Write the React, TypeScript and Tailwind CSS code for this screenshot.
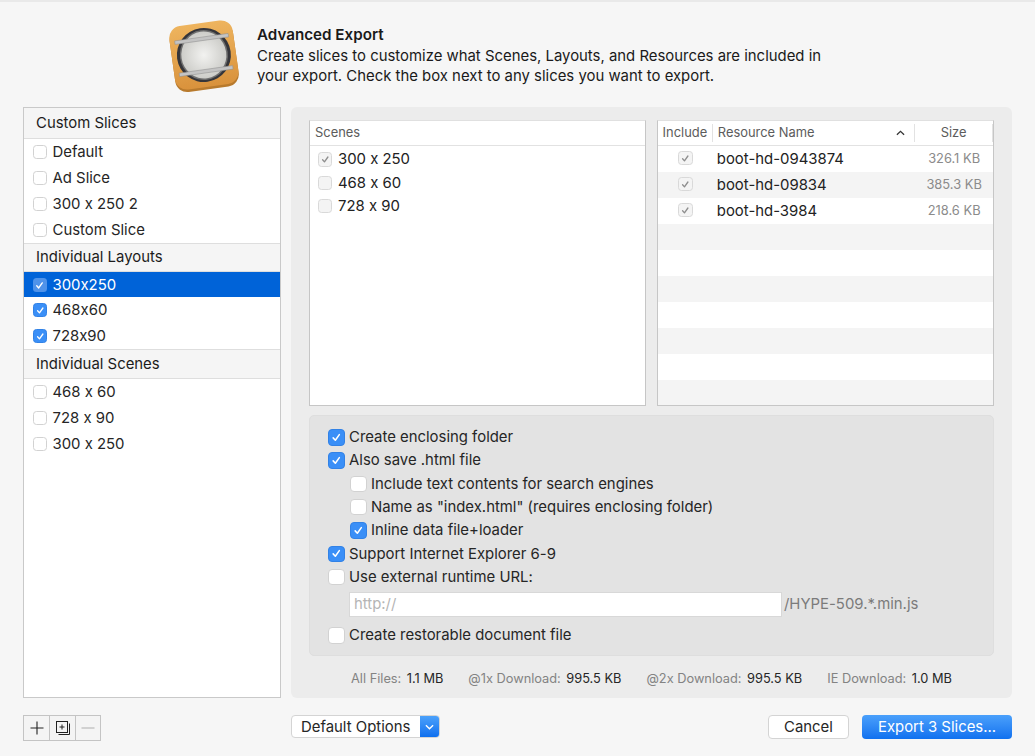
// App.tsx
// Advanced Export sheet

function Check({ className }: { className: string }) {
  return (
    <svg viewBox="0 0 16 16" className={className} fill="none" stroke="currentColor" strokeWidth="1.7" strokeLinecap="round" strokeLinejoin="round">
      <path d="M4.6 8.4 L7 11 L11.4 4.8" />
    </svg>
  )
}

type BoxProps = { checked?: boolean; disabled?: boolean; large?: boolean; onSelected?: boolean }

function Box({ checked, disabled, large, onSelected }: BoxProps) {
  const size = large ? 'w-[16.5px] h-[16.5px] rounded-[4px]' : 'w-[14.5px] h-[14.5px] rounded-[3.5px]'
  if (disabled) {
    return (
      <span className={`${size} shrink-0 flex items-center justify-center bg-[#f4f4f4] border border-[#d9d9d9] text-[#8e8e8e]`}>
        {checked && <Check className="w-[13px] h-[13px]" />}
      </span>
    )
  }
  if (checked) {
    return (
      <span className={`${size} shrink-0 flex items-center justify-center text-white ${onSelected ? 'bg-[#4f93ea]' : 'bg-[#3a8ff7] border border-[#3282e6]'}`}>
        <Check className={large ? 'w-[15px] h-[15px]' : 'w-[13px] h-[13px]'} />
      </span>
    )
  }
  return <span className={`${size} shrink-0 bg-white border border-[#d2d2d2]`} />
}

function SectionHead({ label, className }: { label: string; className: string }) {
  return (
    <div className={`${className} flex items-center pl-[12px] bg-[#f5f5f5] border-b border-[#dedede] text-[14.9px] text-[#1c1c1c]`}>
      {label}
    </div>
  )
}

function SliceRow({ label, checked, selected }: { label: string; checked?: boolean; selected?: boolean }) {
  return (
    <div className={`${selected ? 'h-[25px] pt-[1px] bg-[#0063d8] text-white' : 'h-[26px] text-[#262626]'} flex items-center gap-[5.5px] pl-[8.5px] text-[14.9px]`}>
      <Box checked={checked} onSelected={selected} />
      <span>{label}</span>
    </div>
  )
}

function SlicePanel() {
  return (
    <div className="w-[258px] shrink-0 bg-white border-[1.5px] border-[#c9c9c9]">
      <SectionHead label="Custom Slices" className="h-[31px] pt-[1px]" />
      <SliceRow label="Default" />
      <SliceRow label="Ad Slice" />
      <SliceRow label="300 x 250 2" />
      <SliceRow label="Custom Slice" />
      <SectionHead label="Individual Layouts" className="h-[29px] border-t border-[#dedede]" />
      <SliceRow label="300x250" checked selected />
      <SliceRow label="468x60" checked />
      <SliceRow label="728x90" checked />
      <SectionHead label="Individual Scenes" className="h-[30px] border-t border-[#dedede]" />
      <SliceRow label="468 x 60" />
      <SliceRow label="728 x 90" />
      <SliceRow label="300 x 250" />
    </div>
  )
}

function ScenesTable() {
  const scenes = [
    { name: '300 x 250', checked: true },
    { name: '468 x 60', checked: false },
    { name: '728 x 90', checked: false },
  ]
  return (
    <div className="w-[337px] bg-white border border-[#c6c6c6] border-t-[#e0e0e0]">
      <div className="h-[25px] flex items-center pl-[5px] border-b border-[#e2e2e2] text-[12.9px] text-[#5c5c5c]">Scenes</div>
      <div className="pt-[2px]">
        {scenes.map(s => (
          <div key={s.name} className="h-[23.3px] flex items-center gap-[6px] pl-[7.5px] text-[14.9px] text-[#222222]">
            <Box disabled checked={s.checked} />
            <span>{s.name}</span>
          </div>
        ))}
      </div>
    </div>
  )
}

function ResourceTable() {
  const rows = [
    { name: 'boot-hd-0943874', size: '326.1 KB' },
    { name: 'boot-hd-09834', size: '385.3 KB' },
    { name: 'boot-hd-3984', size: '218.6 KB' },
    null, null, null, null, null, null, null,
  ]
  return (
    <div className="w-[337px] bg-white border border-[#c6c6c6] border-t-[#e0e0e0] overflow-hidden">
      <div className="h-[25px] flex items-center border-b border-[#e2e2e2] text-[12.9px] text-[#5c5c5c]">
        <div className="w-[55px] h-[18px] flex items-center justify-center border-r border-[#e2e2e2]">Include</div>
        <div className="w-[203px] h-[18px] flex items-center justify-between pl-[5px] pr-[9px] border-r border-[#e2e2e2]">
          <span>Resource Name</span>
          <svg viewBox="0 0 10 6" className="w-[9px] h-[6px]" fill="none" stroke="#333333" strokeWidth="1.4">
            <path d="M1 5 L5 1.2 L9 5" />
          </svg>
        </div>
        <div className="w-[78px] h-[18px] flex items-center justify-center border-r border-[#e2e2e2]">Size</div>
      </div>
      {rows.map((r, i) => (
        <div key={i} className={`h-[26px] flex items-center ${i % 2 === 1 ? 'bg-[#f4f4f4]' : 'bg-white'}`}>
          {r && (
            <>
              <div className="w-[55px] flex justify-center pb-[2px]"><Box disabled checked /></div>
              <div className="w-[203px] pl-[4px] text-[14.9px] text-[#222222]">{r.name}</div>
              <div className="w-[78px] text-center text-[12.9px] text-[#8b8b8b]">{r.size}</div>
            </>
          )}
        </div>
      ))}
    </div>
  )
}

function Option({ label, checked, indent }: { label: string; checked?: boolean; indent?: boolean }) {
  return (
    <div className={`h-[23.3px] flex items-center gap-[4.5px] text-[14.9px] text-[#262626] ${indent ? 'pl-[22px]' : ''}`}>
      <Box large checked={checked} />
      <span>{label}</span>
    </div>
  )
}

function OptionsBox() {
  return (
    <div className="mt-[9px] h-[241px] rounded-[5px] bg-[#e3e3e3] border border-[#dedede] pl-[18px] pt-[9.7px]">
      <Option label="Create enclosing folder" checked />
      <Option label="Also save .html file" checked />
      <Option label="Include text contents for search engines" indent />
      <Option label={'Name as "index.html" (requires enclosing folder)'} indent />
      <Option label="Inline data file+loader" checked indent />
      <Option label="Support Internet Explorer 6-9" checked />
      <Option label="Use external runtime URL:" />
      <div className="mt-[3px] h-[25px] flex items-center pl-[21px]">
        <div className="w-[433px] h-[25px] flex items-center pl-[4px] bg-white border border-[#d8d8d8] text-[14.9px] text-[#b5b5b5]">http://</div>
        <span className="ml-[2px] text-[14.9px] text-[#7b7b7b]">/HYPE-509.*.min.js</span>
      </div>
      <div className="mt-[7px]">
        <Option label="Create restorable document file" />
      </div>
    </div>
  )
}

function Stat({ label, value }: { label: string; value: string }) {
  return (
    <div className="flex gap-[5.5px]">
      <span className="text-[#838383]">{label}</span>
      <span className="text-[#262626]">{value}</span>
    </div>
  )
}

function AppIcon() {
  return (
    <svg viewBox="0 0 76 74" className="w-[76px] h-[74px] shrink-0">
      <defs>
        <linearGradient id="wood" x1="0" y1="0" x2="0" y2="1">
          <stop offset="0" stopColor="#eeb45e" />
          <stop offset="1" stopColor="#d9923c" />
        </linearGradient>
        <radialGradient id="lens" cx="0.5" cy="0.5" r="0.55">
          <stop offset="0" stopColor="#f2f2f0" />
          <stop offset="1" stopColor="#c9c9c5" />
        </radialGradient>
      </defs>
      <g transform="rotate(-8 37 37)">
        <rect x="5" y="6.5" width="64" height="64" rx="12" fill="#b87a2d" />
        <rect x="5" y="4" width="64" height="64" rx="12" fill="url(#wood)" />
        <circle cx="37" cy="36" r="27" fill="#35353a" />
        <ellipse cx="37" cy="36" rx="24" ry="25" fill="#6f6f6f" />
        <ellipse cx="37" cy="36" rx="22.5" ry="23.5" fill="url(#lens)" />
        <rect x="10" y="18" width="54" height="3.5" fill="#c4c4c4" stroke="#8d8d8d" strokeWidth="0.5" />
        <rect x="10" y="50.5" width="54" height="3.5" fill="#c4c4c4" stroke="#8d8d8d" strokeWidth="0.5" />
      </g>
    </svg>
  )
}

export default function App() {
  return (
    <div className="w-[1035px] h-[756px] overflow-hidden bg-[#f6f6f6] border-t-2 border-[#e9e9e9] [font-family:Inter,'Liberation_Sans',sans-serif] [font-feature-settings:'calt'_0]">
      {/* Header */}
      <div className="h-[105px] flex pl-[167px] pt-[17px]">
        <AppIcon />
        <div className="ml-[14px] pt-[4px] text-[14.9px] leading-[20px] text-[#1a1a1a]">
          <div className="font-semibold text-[15.2px] leading-[23px]">Advanced Export</div>
          <div>Create slices to customize what Scenes, Layouts, and Resources are included in</div>
          <div>your export. Check the box next to any slices you want to export.</div>
        </div>
      </div>

      {/* Main */}
      <div className="h-[591px] flex gap-[10px] pl-[23px]">
        <SlicePanel />
        <div className="w-[721px] rounded-[6px] bg-[#ececec] px-[18px] pt-[13px] flex flex-col">
          <div className="h-[286px] flex gap-[11px] shrink-0">
            <ScenesTable />
            <ResourceTable />
          </div>
          <OptionsBox />
          <div className="pl-[42px] pt-[13px] flex gap-[25px] text-[12.8px]">
            <Stat label="All Files:" value="1.1 MB" />
            <Stat label="@1x Download:" value="995.5 KB" />
            <Stat label="@2x Download:" value="995.5 KB" />
            <Stat label="IE Download:" value="1.0 MB" />
          </div>
        </div>
      </div>

      {/* Footer */}
      <div className="flex items-start pl-[23px] pt-[17px]">
        <div className="w-[78px] h-[26px] flex border border-[#c4c4c4] bg-[#f4f4f4]">
          <div className="w-[26px] flex items-center justify-center border-r border-[#c4c4c4]">
            <svg viewBox="0 0 14 14" className="w-[14px] h-[14px]" stroke="#222222" strokeWidth="1.1"><path d="M7 0.5 V13.5 M0.5 7 H13.5" /></svg>
          </div>
          <div className="w-[26px] flex items-center justify-center border-r border-[#c4c4c4]">
            <svg viewBox="0 0 16 16" className="w-[16px] h-[16px]" fill="none" stroke="#222222" strokeWidth="1">
              <rect x="1.5" y="1.5" width="11" height="11" />
              <path d="M14.5 3.5 V14.5 H3.5" />
              <path d="M7 4.5 V9.5 M4.5 7 H9.5" />
            </svg>
          </div>
          <div className="flex-1 flex items-center justify-center">
            <svg viewBox="0 0 14 2" className="w-[14px] h-[2px]" stroke="#b9b9b9" strokeWidth="1.2"><path d="M0.5 1 H13.5" /></svg>
          </div>
        </div>
        <div className="ml-[190px] w-[149px] h-[23px] flex rounded-[4px] border border-[#d4d4d4] bg-white overflow-hidden">
          <div className="flex-1 pl-[9px] text-[14.9px] leading-[22px] text-[#262626]">Default Options</div>
          <div className="w-[19px] flex items-center justify-center bg-gradient-to-b from-[#4ba1fb] to-[#0d6fee]">
            <svg viewBox="0 0 10 6" className="w-[9px] h-[6px]" fill="none" stroke="#ffffff" strokeWidth="1.5"><path d="M1 1 L5 5 L9 1" /></svg>
          </div>
        </div>
        <div className="ml-[328px] w-[81px] h-[24px] flex items-center justify-center rounded-[4px] border border-[#d4d4d4] bg-white text-[14.9px] text-[#262626]">Cancel</div>
        <div className="ml-[13px] w-[150px] h-[24px] flex items-center justify-center rounded-[4px] bg-gradient-to-b from-[#4aa0fb] to-[#0f71ef] text-[14.9px] text-white">Export 3 Slices...</div>
      </div>
    </div>
  )
}
